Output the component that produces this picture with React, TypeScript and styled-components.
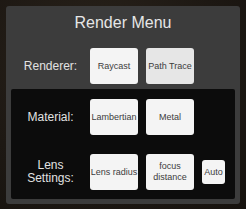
import React from "react";
import styled, { createGlobalStyle } from "styled-components";

const Global = createGlobalStyle`
  html, body { margin: 0; padding: 0; }
  body {
    width: 246px;
    height: 209px;
    overflow: hidden;
    background: radial-gradient(ellipse at 40% 30%, #2a231b 0%, #1d1813 60%, #16120e 100%);
    font-family: "Liberation Sans", Arial, sans-serif;
  }
`;

const Screen = styled.div`
  padding: 6px 0 0 6px;
`;

const Panel = styled.div`
  width: 234px;
  height: 198px;
  box-sizing: border-box;
  background: #3c3c3c;
  border-radius: 3px;
  padding: 0 5px 5px 5px;
  display: flex;
  flex-direction: column;
`;

const Title = styled.div`
  height: 34px;
  display: flex;
  align-items: center;
  justify-content: center;
  color: #e6e6e6;
  font-size: 16px;
  padding-left: 0;
`;

const Row = styled.div<{ $mt?: number }>`
  display: flex;
  align-items: center;
  height: 36px;
  margin-top: ${(p) => p.$mt ?? 0}px;
`;

const Label = styled.div`
  width: 79px;
  text-align: center;
  color: #e2e2e2;
  font-size: 12px;
  line-height: 13px;
`;

const Buttons = styled.div`
  display: flex;
  align-items: center;
  gap: 8px;
`;

const Button = styled.div<{ $w?: number; $h?: number; $bg?: string }>`
  width: ${(p) => p.$w ?? 48}px;
  height: ${(p) => p.$h ?? 36}px;
  background: ${(p) => p.$bg ?? "#f4f4f4"};
  border-radius: 3px;
  display: flex;
  align-items: center;
  justify-content: center;
  text-align: center;
  color: #3c3c3c;
  font-size: 9px;
  line-height: 11px;
`;

const Inner = styled.div`
  margin-top: 5px;
  flex: 1;
  background: #0c0c0c;
  border-radius: 2px;
  padding-top: 10px;
  display: flex;
  flex-direction: column;
  gap: 19px;
`;

export default function App() {
  return (
    <>
      <Global />
      <Screen>
        <Panel>
          <Title>Render Menu</Title>
          <Row $mt={8}>
            <Label>Renderer:</Label>
            <Buttons>
              <Button>Raycast</Button>
              <Button $bg="#e6e6e6">Path Trace</Button>
            </Buttons>
          </Row>
          <Inner>
            <Row>
              <Label>Material:</Label>
              <Buttons>
                <Button>Lambertian</Button>
                <Button>Metal</Button>
              </Buttons>
            </Row>
            <Row>
              <Label>
                Lens
                <br />
                Settings:
              </Label>
              <Buttons>
                <Button>Lens radius</Button>
                <Button>
                  focus
                  <br />
                  distance
                </Button>
                <Button $w={23} $h={24}>Auto</Button>
              </Buttons>
            </Row>
          </Inner>
        </Panel>
      </Screen>
    </>
  );
}
